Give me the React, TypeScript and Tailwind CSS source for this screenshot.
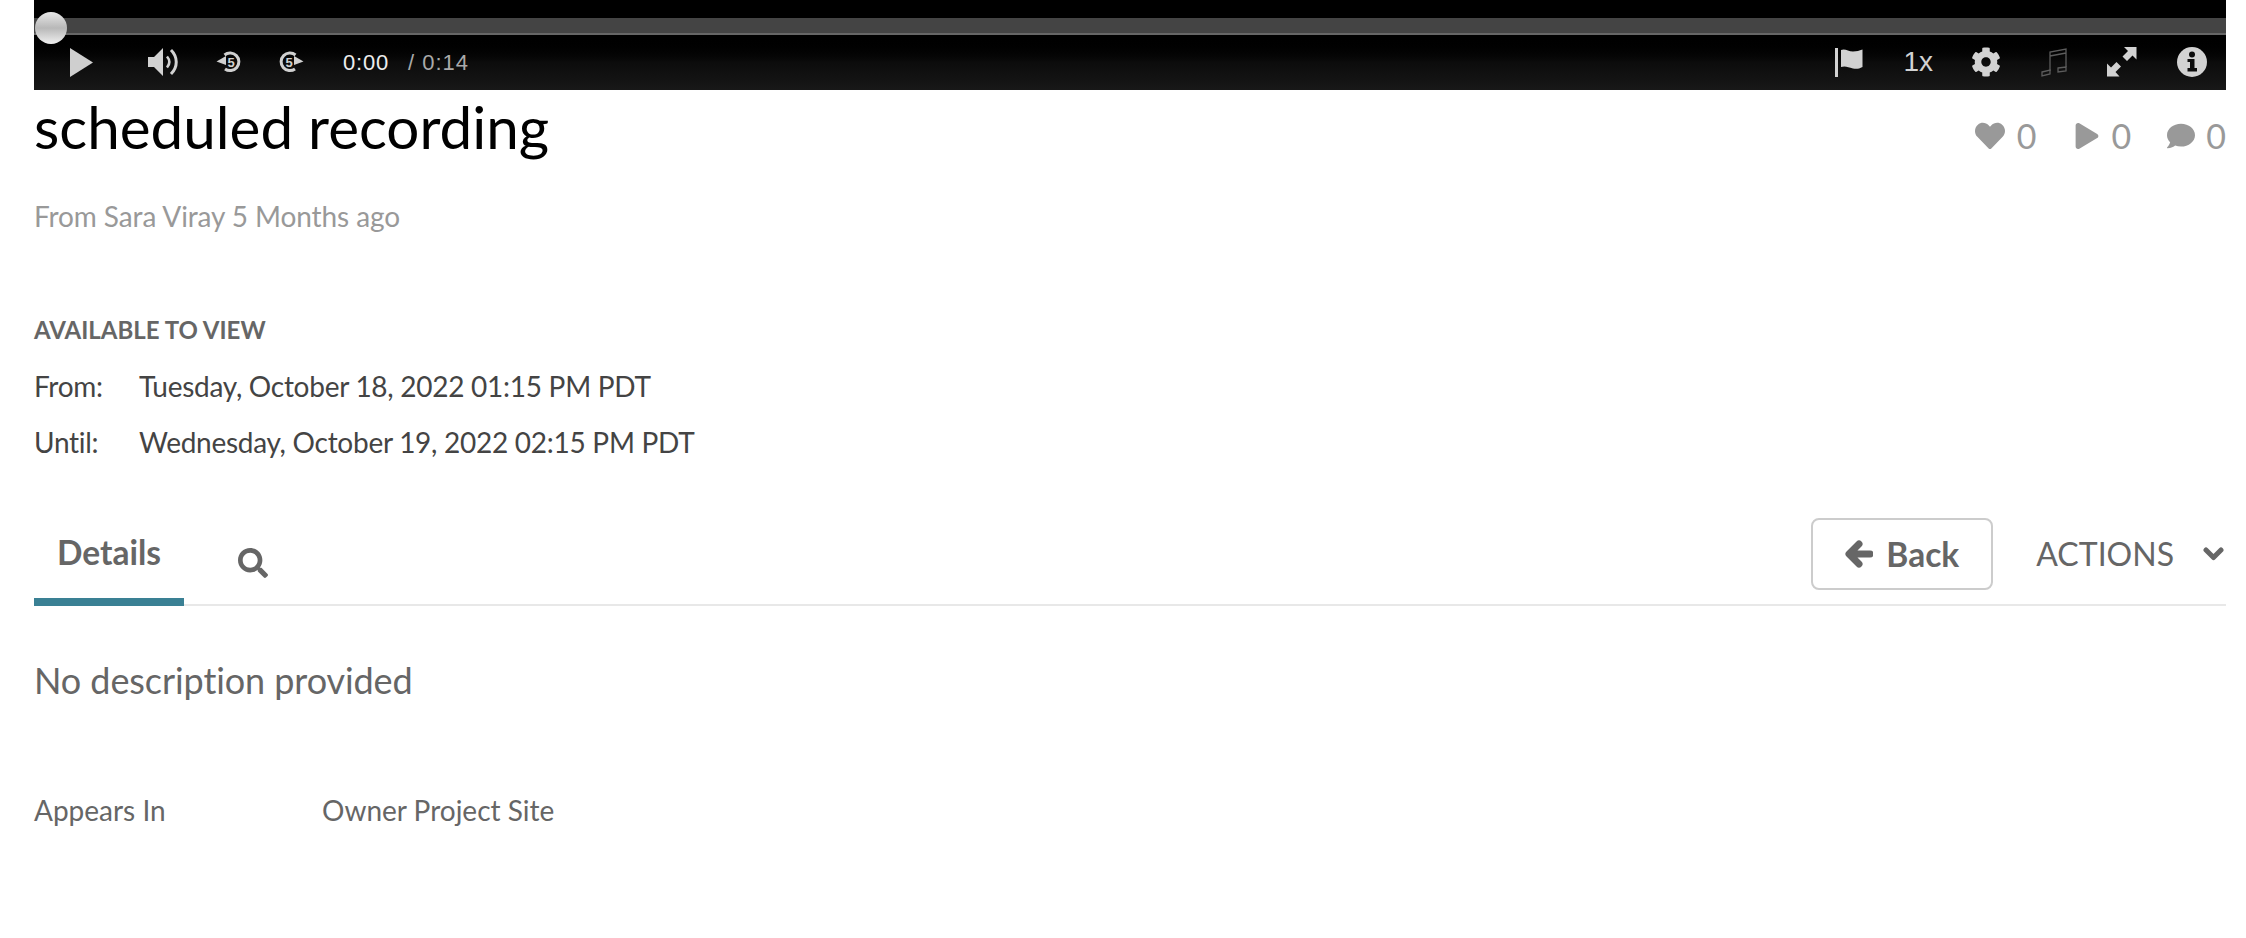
import React from "react";
import { FaHeart, FaPlay, FaComment, FaSearch, FaCog } from "react-icons/fa";

function Replay({ flip }: { flip?: boolean }) {
  return (
    <svg width="26" height="22" viewBox="0 0 26 22">
      <g transform={flip ? "translate(26 0) scale(-1 1)" : undefined}>
        <path d="M8.5 4 A8.8 8.8 0 1 1 9 18" fill="none" stroke="#d0d0d0" strokeWidth="3" />
        <path d="M0.5 10.5 L10 5 L10 14 Z" fill="#d0d0d0" />
      </g>
      <text x={flip ? 11 : 15} y="15.5" fontSize="13" fontWeight="700" fill="#d0d0d0" textAnchor="middle" fontFamily="Liberation Sans">5</text>
    </svg>
  );
}

function PlayTriangle() {
  return (
    <svg width="23" height="29" viewBox="0 0 23 29" fill="#cfcfcf">
      <path d="M0 0 L23 14.5 L0 29 Z" />
    </svg>
  );
}

function Speaker() {
  return (
    <svg width="30" height="30" viewBox="0 0 30 30" fill="none">
      <path d="M0 10 H6 L15 1 V29 L6 20 H0 Z" fill="#d2d2d2" />
      <path d="M19 9.5 C22 13 22 17 19 20.5" stroke="#d2d2d2" strokeWidth="2.6" />
      <path d="M23 3 C30 10 30 20 23 27" stroke="#d2d2d2" strokeWidth="3" />
    </svg>
  );
}

function Flag() {
  return (
    <svg width="28" height="30" viewBox="0 0 28 30" fill="#d2d2d2">
      <rect x="0" y="1" width="3" height="29" />
      <path d="M6 3 C10 1 13 4.5 18 4.5 C22 4.5 24 3.5 27.5 2.5 L27.5 20 C24 22 21 22 18 21.5 C13 20 10 18.5 6 20 Z" />
    </svg>
  );
}

function Music() {
  return (
    <svg width="26" height="30" viewBox="0 0 26 30" fill="none" stroke="#5c5c5c" strokeWidth="1.3">
      <path d="M9 24 V5 L25 2 V20 M9 9 L25 6" />
      <path d="M1 25 L9 23 V27 L1 29 Z M17 21 L25 20 V24 L17 25 Z" />
    </svg>
  );
}

function Expand() {
  return (
    <svg width="30" height="30" viewBox="0 0 30 30" fill="#d2d2d2">
      <path d="M17 0 H29.5 V12.5 L25.5 8.5 L20 14 L15.5 9.5 L21 4 Z" />
      <path d="M0 16.5 L4 20.5 L9.5 15 L14 19.5 L8.5 25 L12.5 29.5 H0 Z" />
    </svg>
  );
}

function Info() {
  return (
    <svg width="30" height="30" viewBox="0 0 30 30">
      <circle cx="15" cy="15" r="15" fill="#d2d2d2" />
      <circle cx="15" cy="7.5" r="3" fill="#0c0c0c" />
      <path d="M10.5 12 H17.5 V21 H20 V24.5 H10.5 V21 H13 V15 H10.5 Z" fill="#0c0c0c" />
    </svg>
  );
}

function BackArrow() {
  return (
    <svg width="28" height="28" viewBox="0 0 28 28" fill="none" stroke="#666" strokeWidth="7" strokeLinecap="round" strokeLinejoin="round">
      <path d="M25 14 H5 M14 4 L4 14 L14 24" />
    </svg>
  );
}

function Chevron() {
  return (
    <svg width="21" height="14" viewBox="0 0 21 14" fill="none" stroke="#666" strokeWidth="5" strokeLinecap="round" strokeLinejoin="round">
      <path d="M3 3 L10.5 10.5 L18 3" />
    </svg>
  );
}

function Stat({ icon, className }: { icon: React.ReactNode; className?: string }) {
  return (
    <div className={`flex items-center ${className ?? ""}`}>
      {icon}
      <span>0</span>
    </div>
  );
}

export default function App() {
  return (
    <div className="min-h-[938px] bg-white pl-[34px] pr-[20px] font-['Lato',sans-serif] text-[#666]">
      <div className="relative h-[90px] bg-black pt-[18px]">
        <div className="h-[17px] border-b-2 border-[#666] bg-[#444]" />
        <div className="absolute left-px top-[12px] h-[32px] w-[32px] rounded-full bg-gradient-to-b from-[#e8e8e8] via-[#b8b8b8] to-[#f0f0f0]" />
        <div className="flex h-[55px] items-center bg-gradient-to-b from-[#000] via-[#0c0c0c] to-[#181818] pb-[1px] pl-[36px] text-[#d2d2d2]">
          <PlayTriangle />
          <div className="ml-[55px]"><Speaker /></div>
          <div className="ml-[38px]"><Replay /></div>
          <div className="ml-[36px]"><Replay flip /></div>
          <span className="ml-[39px] font-['Liberation_Sans',sans-serif] text-[22px] tracking-[0.8px] text-[#eee]">0:00</span>
          <span className="ml-[19px] font-['Liberation_Sans',sans-serif] text-[22px] tracking-[1px] text-[#aaa]">/ 0:14</span>
          <div className="ml-auto flex items-center">
            <Flag />
            <span className="ml-[40px] font-['Liberation_Sans',sans-serif] text-[28px]">1x</span>
            <FaCog className="ml-[38px] text-[30px]" />
            <div className="ml-[40px]"><Music /></div>
            <div className="ml-[40px]"><Expand /></div>
            <div className="ml-[40px] mr-[19px]"><Info /></div>
          </div>
        </div>
      </div>

      <div className="flex items-start justify-between">
        <h1 className="text-[58.4px] leading-[72px] text-black">scheduled recording</h1>
        <div className="mt-[26px] flex items-center text-[34px] leading-[40px] text-[#999]">
          <Stat icon={<FaHeart className="mr-[12px] text-[30px]" />} />
          <Stat className="ml-[37px]" icon={<FaPlay className="mr-[12px] text-[26px]" />} />
          <Stat className="ml-[36px]" icon={<FaComment className="mr-[11px] text-[28px]" />} />
        </div>
      </div>

      <p className="mt-[36px] text-[28px] leading-[36px] tracking-[-0.1px] text-[#999]">From Sara Viray 5 Months ago</p>

      <h2 className="mt-[81px] text-[24px] font-bold leading-[30px] text-[#666]">AVAILABLE TO VIEW</h2>
      <div className="mt-[21px] grid grid-cols-[105px_1fr] gap-y-[16px] text-[28px] leading-[40px] tracking-[-0.27px] text-[#444]">
        <span>From:</span>
        <span>Tuesday, October 18, 2022 01:15 PM PDT</span>
        <span>Until:</span>
        <span>Wednesday, October 19, 2022 02:15 PM PDT</span>
      </div>

      <div className="mt-[56px] flex h-[88px] items-stretch border-b-2 border-[#e8e8e8]">
        <div className="-mb-[2px] w-[150px] border-b-[8px] border-[#3a8094] pt-[12px] text-center text-[33.5px] font-bold leading-[44px]">Details</div>
        <FaSearch className="ml-[54px] mt-[30px] text-[30px]" />
        <div className="ml-auto flex items-start">
          <div className="flex h-[72px] w-[182px] items-center justify-center gap-[13px] rounded-[8px] border-2 border-[#ccc] text-[33.5px] font-bold">
            <BackArrow />
            <span>Back</span>
          </div>
          <span className="ml-[43px] mt-[14px] text-[32px] leading-[44px]">ACTIONS</span>
          <div className="ml-[29px] mr-[2px] mt-[29px]"><Chevron /></div>
        </div>
      </div>

      <p className="mt-[50px] text-[36px] leading-[48px] tracking-[-0.08px]">No description provided</p>

      <div className="mt-[88px] flex text-[28px] leading-[36px]">
        <span className="w-[288px]">Appears In</span>
        <span>Owner Project Site</span>
      </div>
    </div>
  );
}
